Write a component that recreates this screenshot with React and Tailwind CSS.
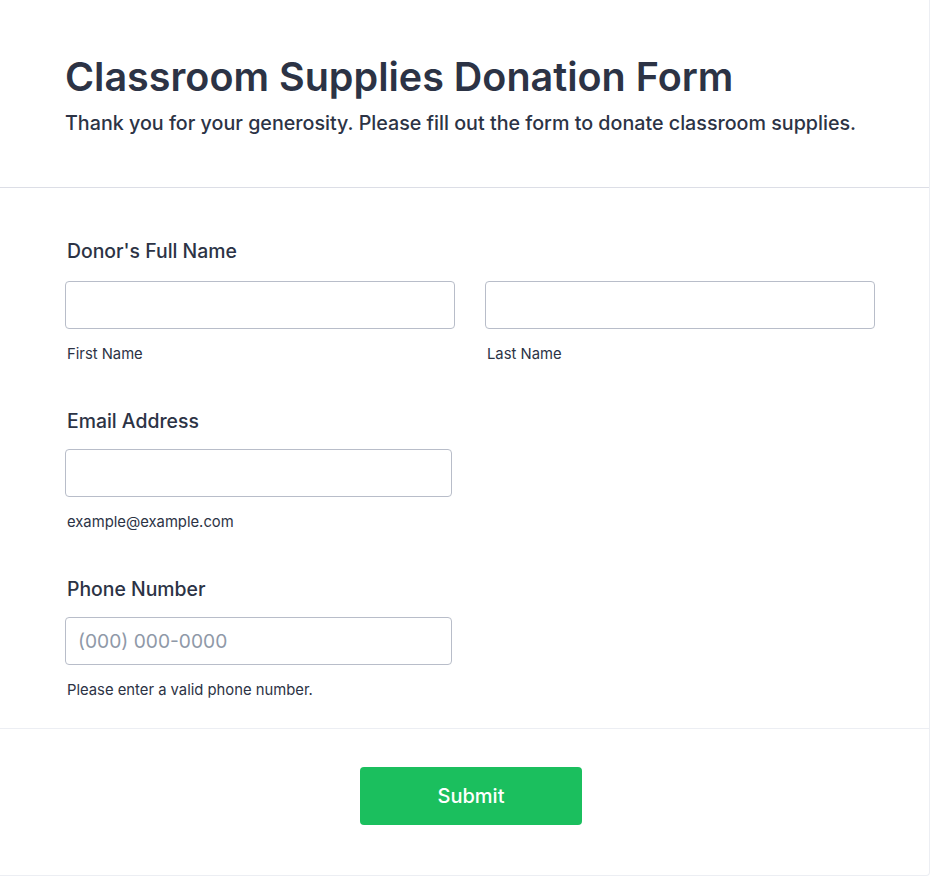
import React from 'react';

function Field({ label, hint, children, labelGap = 'mb-4' }) {
  return (
    <div>
      <label className={`block pl-[2px] text-[19.4px] leading-6 font-medium text-[#2c3345] ${labelGap}`}>{label}</label>
      {children}
      {hint}
    </div>
  );
}

function Hint({ children }) {
  return <p className="mt-[15px] pl-[2px] text-[14.8px] leading-5 text-[#2c3345]">{children}</p>;
}

const inputCls =
  'block h-12 rounded-[4px] border border-[#b8bdc9] bg-white px-3 text-[19.2px] text-[#2c3345] placeholder:text-[#8f99a8] outline-none';

export default function App() {
  return (
    <div
      className="w-[930px] h-[876px] bg-white border-r border-b border-[#eceef3] rounded-br-[4px]"
      style={{ fontFamily: 'Inter, "Noto Sans", sans-serif' }}
    >
      <div className="pl-[65px] pr-[54px] pt-[55px] pb-[52px] border-b border-[#dcdee6]">
        <h1 className="text-[39.5px] leading-[44px] font-semibold text-[#2c3345]">Classroom Supplies Donation Form</h1>
        <p className="mt-3 text-[19.7px] leading-6 font-medium text-[#2c3345]">
          Thank you for your generosity. Please fill out the form to donate classroom supplies.
        </p>
      </div>

      <div className="pl-[65px] pr-[54px] pt-[51px] pb-[28px] border-b border-[#eceef3] flex flex-col gap-[45px]">
        <Field label="Donor's Full Name" labelGap="mb-[18px]">
          <div className="flex gap-[30px]">
            <div className="w-[390px] shrink-0">
              <input className={`${inputCls} w-full`} />
              <Hint>First Name</Hint>
            </div>
            <div className="w-[390px] shrink-0">
              <input className={`${inputCls} w-full`} />
              <Hint>Last Name</Hint>
            </div>
          </div>
        </Field>

        <Field label="Email Address" hint={<Hint>example@example.com</Hint>}>
          <input className={`${inputCls} w-[387px]`} />
        </Field>

        <Field label="Phone Number" hint={<Hint>Please enter a valid phone number.</Hint>}>
          <input className={`${inputCls} w-[387px]`} placeholder="(000) 000-0000" />
        </Field>
      </div>

      <div className="flex justify-center pl-[66px] pr-[53px] pt-[38px]">
        <button className="w-[222px] h-[58px] rounded-[4px] bg-[#1bbf5e] text-white text-[20px] font-medium">
          Submit
        </button>
      </div>
    </div>
  );
}
